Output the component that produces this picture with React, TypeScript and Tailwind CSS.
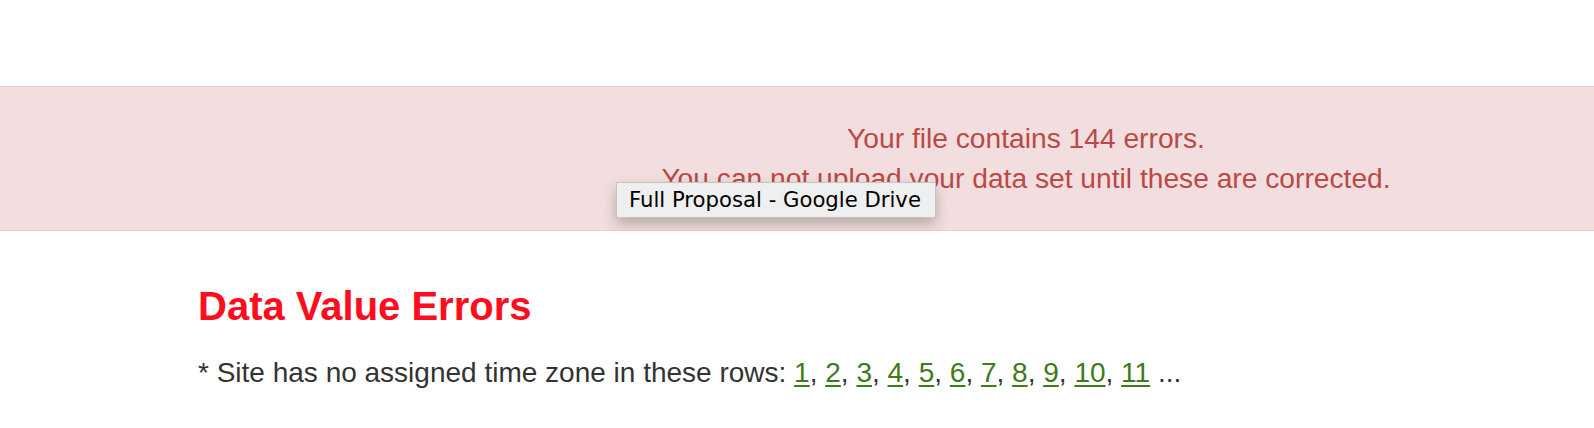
import React from "react";

const rows = [1, 2, 3, 4, 5, 6, 7, 8, 9, 10, 11];

export default function App() {
    return (
        <div className="relative min-h-[428px] bg-white font-['Liberation_Sans',Arial,sans-serif] text-[#333]">
            {/* Upload error banner */}
            <div className="pt-[86px]">
                <div className="border-y border-[#ebccd1] bg-[#f2dede] pt-[31px] pb-[32px] pl-[458px] text-center text-[28.2px] leading-[40px] text-[#b94a48]">
                    <p>Your file contains 144 errors.</p>
                    <p>You can not upload your data set until these are corrected.</p>
                </div>
            </div>

            <div className="pl-[198px]">
                <h2 className="mt-[53px] text-[40px] font-bold leading-[44px] text-[#fe0d1e]">
                    Data Value Errors
                </h2>
                <p className="mt-[26px] text-[28px] leading-[37px]">
                    * Site has no assigned time zone in these rows:{" "}
                    {rows.map((row, i) => (
                        <span key={row}>
                            <a href="#" className="text-[#3f7a1c] underline underline-offset-[3px]">
                                {row}
                            </a>
                            {i < rows.length - 1 ? ", " : " ..."}
                        </span>
                    ))}
                </p>
            </div>

            {/* Browser tooltip */}
            <div className="absolute left-[616px] top-[182px] flex h-[36px] w-[320px] items-center border border-[#c4c4c4] bg-[#efefef] pl-[12px] font-['DejaVu_Sans',sans-serif] text-[21.2px] text-black shadow-[0_6px_14px_rgba(0,0,0,0.25)]">
                Full Proposal - Google Drive
            </div>
        </div>
    );
}
